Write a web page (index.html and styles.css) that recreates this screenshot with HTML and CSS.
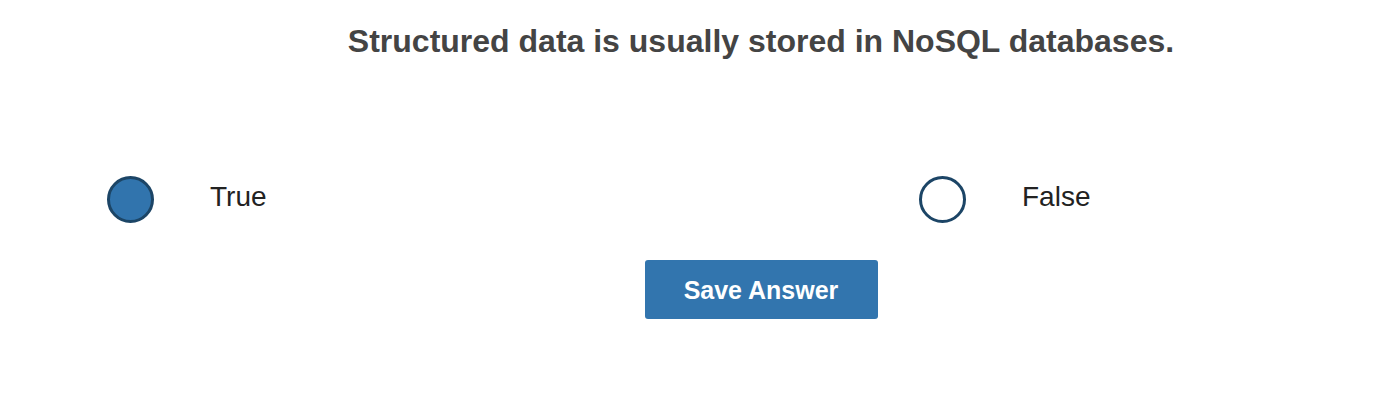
FILE: index.html
```html
<!DOCTYPE html>
<html lang="en">
  <head>
    <meta charset="UTF-8" />
    <meta name="viewport" content="width=device-width, initial-scale=1.0" />
    <title>Question</title>
    <link rel="stylesheet" href="styles.css">
  </head>
  <body>
    <div class="question">
      <h1>Structured data is usually stored in NoSQL databases.</h1>

      <div class="options">
        <label class="option">
          <input type="radio" name="answer" value="true" checked />
          <span class="radio"></span>
          <span class="label">True</span>
        </label>
        <label class="option">
          <input type="radio" name="answer" value="false" />
          <span class="radio"></span>
          <span class="label">False</span>
        </label>
      </div>

      <div class="actions">
        <button class="save">Save Answer</button>
      </div>
    </div>
  </body>
</html>
```

FILE: styles.css
```css
body {
  margin: 0;
  font-family: "Liberation Sans", Arial, sans-serif;
  background: #fff;
}

.question {
  padding-left: 130px;
}

h1 {
  margin: 0;
  padding-top: 21px;
  font-size: 32px;
  line-height: 40px;
  color: #444;
  text-align: center;
}

.options {
  display: flex;
  margin-left: -23px;
  padding-top: 115px;
}

.option {
  display: flex;
  align-items: center;
  cursor: pointer;
}

.option:first-of-type {
  flex: 0 0 812px;
}

.option input {
  display: none;
}

.radio {
  box-sizing: border-box;
  width: 47px;
  height: 47px;
  border: 3px solid #1c4566;
  border-radius: 50%;
  background: #fff;
}

.option input:checked + .radio {
  background: #3174ad;
}

.label {
  margin-left: 56px;
  padding-bottom: 6px;
  font-size: 28px;
  color: #222;
}

.actions {
  display: flex;
  justify-content: center;
  padding-top: 37px;
}

.save {
  width: 233px;
  height: 59px;
  border: none;
  border-radius: 3px;
  background: #3275ae;
  color: #fff;
  font-family: "Liberation Sans", Arial, sans-serif;
  font-size: 25px;
  font-weight: bold;
  padding-top: 2px;
  cursor: pointer;
}
```
